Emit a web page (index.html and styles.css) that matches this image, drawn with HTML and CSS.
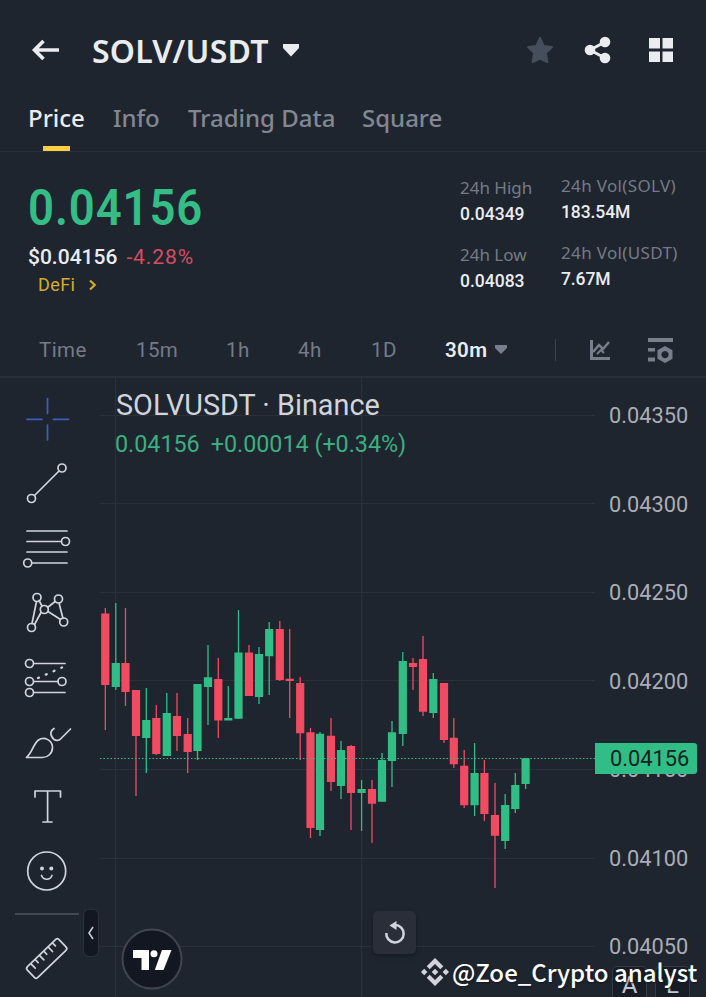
FILE: index.html
```html
<!DOCTYPE html>
<html lang="en">
<head>
<meta charset="utf-8">
<title>SOLV/USDT</title>
<link rel="stylesheet" href="styles.css">
</head>
<body>
<main class="app">
  <header class="topbar">
    <svg class="back" viewBox="0 0 30 24" width="30" height="24"><path d="M28 12H4M12.500 3L3.500 12l9 9" fill="none" stroke="#eaecef" stroke-width="3.600"/></svg>
    <h1 class="pair">SOLV/USDT</h1>
    <svg class="caret" viewBox="0 0 18 13" width="18" height="13"><path d="M1 0h16v4L9 12.500 1 4z" fill="#eaecef"/></svg>
    <svg class="star" viewBox="0 0 28 28" width="28" height="28"><path d="M14 2l3.600 8 8.400 1-6.200 6 1.600 9L14 22.500 6.600 26l1.600-9L2 11l8.400-1z" fill="#444f5b" stroke="#444f5b" stroke-width="2" stroke-linejoin="round"/></svg>
    <svg class="share" viewBox="0 0 28 28" width="28" height="28"><path d="M21 6L6 14l15 8" fill="none" stroke="#eaecef" stroke-width="3"/><g fill="#eaecef"><circle cx="21" cy="6" r="5.300"/><circle cx="6" cy="14" r="5.300"/><circle cx="21" cy="22" r="5.300"/></g></svg>
    <svg class="apps" viewBox="0 0 26 26" width="26" height="26"><path d="M1 1h11v10.500H1zM14.500 1H25v10.500H14.500zM1 14.500h11V25H1zM14.500 14.500H25V25H14.500z" fill="#eaecef"/></svg>
  </header>
  <nav class="tabs">
    <a class="tab active">Price</a><a class="tab info">Info</a><a class="tab trading">Trading Data</a><a class="tab">Square</a>
  </nav>
  <section class="summary">
    <div class="quote">
      <div class="last">0.04156</div>
      <div class="fiat"><span class="usd">$0.04156</span><span class="change">-4.28%</span></div>
      <div class="tag"><span>DeFi</span><svg viewBox="0 0 8 12" width="8" height="12"><path d="M1 1.500L5.700 6 1 10.500" fill="none" stroke="#d6ab2c" stroke-width="2.200"/></svg></div>
    </div>
    <dl class="stats">
      <div class="stat"><dt>24h High</dt><dd>0.04349</dd></div>
      <div class="stat"><dt>24h Low</dt><dd>0.04083</dd></div>
    </dl>
    <dl class="stats volume">
      <div class="stat"><dt>24h Vol(SOLV)</dt><dd>183.54M</dd></div>
      <div class="stat"><dt>24h Vol(USDT)</dt><dd>7.67M</dd></div>
    </dl>
  </section>
  <nav class="intervals">
    <span>Time</span><span>15m</span><span>1h</span><span>4h</span><span>1D</span>
    <span class="selected">30m<svg viewBox="0 0 12 9" width="12" height="9"><path d="M0 0h12v3L6 9 0 3z" fill="#767f8b"/></svg></span>
    <i class="sep"></i>
    <svg class="tool" viewBox="588 335 24 26" width="24" height="26"><g fill="none" stroke="#767f8b"><path d="M591.500 338v18.500H610" stroke-width="3"/><path d="M593 350l6-7 4 4 6-7" stroke-width="2.500"/><path d="M597 352l4-4 3 3" stroke-width="2"/></g></svg>
    <svg class="tool" viewBox="646 334 28 28" width="28" height="28"><g fill="#767f8b"><path d="M648 336h25v4h-25zM648 346h7v3.500h-7zM648 355.500h7v4h-7z"/><path fill-rule="evenodd" d="M665 344l7.500 4.200v8.600L665 361l-7.500-4.200v-8.600zM665 349a3.600 3.600 0 1 0 .01 0z"/></g></svg>
  </nav>
  <section class="chart">
    <aside class="drawing">
      <svg viewBox="15 387 64 64"><path d="M47.500 398.500v15M47.500 425v15M27 419.300h15M53.500 419.300h15" stroke="#3b5fc0"/></svg>
      <svg viewBox="15 451 64 64"><path d="M34.500 495.500L59 471"/><circle cx="62" cy="468" r="4"/><circle cx="31.500" cy="498.500" r="4"/></svg>
      <svg viewBox="15 515 64 64"><path d="M27 531h40M27 541.500h34M27 552h40M32 563h35"/><circle cx="65.500" cy="541.500" r="4"/><circle cx="27.700" cy="563" r="4"/></svg>
      <svg viewBox="15 579 64 64"><path d="M36.500 601.500l-4.500 22M39 600.500l3 5.500M47.500 607.500l7-5.500M59 603l4 15.500M48 611.500l12.500 8M41 612.500l-6.500 12"/><circle cx="37" cy="597.500" r="4"/><circle cx="58.500" cy="599" r="4"/><circle cx="44.300" cy="609.500" r="4"/><circle cx="31.500" cy="627.500" r="4"/><circle cx="63.700" cy="622" r="4"/></svg>
      <svg viewBox="15 643 64 64"><path d="M34 663.500h31M34 681.500h24M34 692.500h31"/><path d="M38 678l24-10.500" stroke-dasharray="1 7.500" stroke-width="2.300"/><circle cx="29.500" cy="663.500" r="4"/><circle cx="29.500" cy="681.500" r="4"/><circle cx="62" cy="681.500" r="4"/><circle cx="29.500" cy="692.500" r="4"/></svg>
      <svg viewBox="15 707 64 64"><path d="M26.500 757.500c6-5 7-14 12-17.500 6-4 14 .5 14 7.500 0 6-5 10-10 10zM54 728.500c-3 2-4 5-2 8.500 2.500 4.500 7 4 9 1.500L70.500 729"/></svg>
      <svg viewBox="15 771 64 64"><path d="M35 797v-6h25.500v6M47.600 791v31M43 822h9"/></svg>
      <svg viewBox="15 835 64 64"><circle cx="46.700" cy="871" r="19"/><path d="M41.500 875.500c2 5 8.500 5 10.500 0"/><g fill="#d1d4dc" stroke="none"><circle cx="42" cy="868.500" r="2"/><circle cx="51.300" cy="868.500" r="2"/></g></svg>
      <hr>
      <svg viewBox="15 927 64 64"><g transform="translate(46.700 958.500) rotate(-44)"><rect x="-22" y="-7.500" width="44" height="15" rx="2.500"/><path d="M-15 -7v6M-9 -7v4M-3 -7v6M3 -7v4M9 -7v6M15 -7v4"/></g></svg>
    </aside>
    <div class="plot">
      <svg class="candles" viewBox="100 376 495 621" width="495" height="621">
        <path class="grid" d="M100 415.500H595M100 503.500H595M100 592.500H595M100 680.500H595M100 769.500H595M100 858.500H595M100 946.500H595M115.500 376V997M361.500 376V997"/>
        <path class="wick down" d="M105.300 608V730M125.500 608V706M136 690V796M156.300 705V755M177 693V751M187.700 718V773M218.300 658V738M249 645V696M279.800 621V681M289.700 629V718M300.200 677V760M310.500 728V838M331 718V791M351 745V830M372 780V843M413 658V690M423 636V716M444 683V743M453.800 718V768M464.200 750V808M484.400 760V821M495 783V888"/>
        <path class="wick up" d="M115.800 603V690M146.300 688V773M166.800 693V756M197.500 684V760M208 645V725M228.300 686V720M238.500 610V719M259 647V704M269.200 622V695M320 732V836M341 741V799M361.600 780V831M382 753V802M392 721V787M402.800 652V746M433.300 673V718M474.600 743V816M505.200 794V849M515.300 773V813M525.600 758V789"/>
        <path class="body down" d="M105.300 613.500V685M125.500 663V692M136 690V736M156.300 718V754M177 716V736M187.700 734V752M218.300 679V720.500M249 652.500V696M279.800 629V680M289.700 678.700V681M300.200 683V733.300M310.500 732.300V828M331 735.700V782M351 746V793M372 789V803.700M413 663V667M423 659V711.700M444 683V740M453.800 737.700V764.300M464.200 765.700V805.300M484.400 773V814M495 815V835.700"/>
        <path class="body up" d="M115.800 663V687M146.300 720V738M166.800 713V756M197.500 684V751M208 677.300V687M228.300 718V720.500M238.500 652.500V718.700M259 654V697M269.200 629V656.300M320 733.700V830M341 750V786M361.600 789V793M382 760V801.700M392 732.300V761M402.800 661V734M433.300 679V713M474.600 773V805.300M505.200 805V841M515.300 785V809M525.600 758.300V784"/>
        <path class="lastline" d="M100 758.500H595"/>
      </svg>
      <div class="legend"><div class="symbol">SOLVUSDT · Binance</div><div class="delta"><span>0.04156</span><span>+0.00014 (+0.34%)</span></div></div>
      <div class="collapse"><svg viewBox="0 0 8 14" width="8" height="14"><path d="M6 1L2 7l4 6" fill="none" stroke="#c8cbd3" stroke-width="1.600"/></svg></div>
      <svg class="tv" viewBox="120 928 64 64" width="64" height="64"><circle cx="152" cy="959" r="29.500" fill="#131722" stroke="#41454f" stroke-width="2"/><g fill="#fff"><path d="M133 950h16v20h-7.500v-12H133z"/><circle cx="154" cy="953.700" r="3.500"/><path d="M162 950h9.500l-8 20h-8.700z"/></g></svg>
      <div class="reset"><svg viewBox="0 0 24 24" width="24" height="24"><path d="M3.300 12a8.700 8.700 0 1 0 8.700-8" fill="none" stroke="#d1d4dc" stroke-width="2.500"/><path d="M6.500 4.500L13.500 0v9z" fill="#d1d4dc"/></svg></div>
    </div>
    <aside class="axis">
      <span>0.04350</span><span>0.04300</span><span>0.04250</span><span>0.04200</span><span>0.04150</span><span>0.04100</span><span>0.04050</span>
      <b class="current">0.04156</b>
      <div class="modes"><i>A</i><i>L</i></div>
    </aside>
  </section>
  <div class="credit">
    <svg viewBox="0 0 28 28" width="28" height="28"><g fill="#d1d4dc"><path d="M14 0l8.300 8.300-3 3L14 6 8.700 11.300l-3-3zM14 28l8.300-8.300-3-3L14 22l-5.300-5.300-3 3zM14 10.700l3.300 3.300-3.300 3.300-3.300-3.300zM3.200 10.800L6.400 14l-3.200 3.200L0 14zM24.800 10.800L28 14l-3.200 3.200-3.200-3.200z"/></g></svg>
    <span>@Zoe_Crypto analyst</span>
  </div>
</main>
</body>
</html>
```
FILE: styles.css
```css
* { box-sizing: border-box; }
body { margin: 0; background: #1f252f; }
.app { position: relative; width: 706px; height: 997px; overflow: hidden; color: #eaecef; font-family: Roboto, "Liberation Sans", sans-serif; background: #1f252f; }
svg { display: block; flex: none; }
.topbar { display: flex; align-items: center; height: 100px; padding-left: 31px; }
.pair { margin: 2px 0 0 31px; width: 179px; font: 600 32px/44px "Noto Sans", sans-serif; letter-spacing: .2px; white-space: nowrap; }
.caret { margin-left: 11px; }
.star { margin-left: 226px; }
.share { margin-left: 30px; }
.apps { margin-left: 36px; }
.tabs { display: grid; grid-template-columns: 85px 75px 174px 1fr; height: 52px; padding-left: 28px; border-bottom: 1px solid #2a313b; font: 500 24px/36px "Noto Sans", sans-serif; color: #818894; white-space: nowrap; }
.tab { display: flex; flex-direction: column; }
.active { width: 57px; color: #eaecef; }
.active::after { content: ""; width: 27px; height: 5px; margin: 10px 0 0 15px; background: #f8cf47; }
.summary { display: flex; height: 170px; }
.quote { width: 460px; padding: 31px 0 0 28px; }
.last { width: 200px; font-size: 50px; line-height: 50px; font-weight: 600; color: #35bd86; letter-spacing: 1px; transform: scaleX(.91); transform-origin: left; }
.fiat { display: flex; gap: 9px; margin-top: 10px; font-size: 21px; line-height: 28px; }
.usd { font-weight: 500; }
.change { color: #d84c60; letter-spacing: .9px; }
.tag { display: flex; align-items: center; gap: 14px; margin-left: 10px; font-size: 18px; line-height: 28px; letter-spacing: .4px; color: #d6ab2c; }
.stats { width: 101px; margin: 0; padding-top: 23px; white-space: nowrap; }
.volume { width: 130px; padding-top: 21px; }
.stat { height: 67px; }
dt { font: 17px/26px "Noto Sans", sans-serif; color: #747b87; }
.volume dt { letter-spacing: .35px; }
dd { margin: 0; font-size: 17.500px; line-height: 26px; font-weight: 500; }
.volume dd { letter-spacing: -.1px; }
.intervals { display: grid; grid-template-columns: 97px 90px 72px 73px 74px 110px 33px 58px 28px; align-items: center; height: 55px; padding-left: 39px; font-size: 20.500px; letter-spacing: .4px; color: #747b87; }
.selected { display: flex; align-items: center; gap: 8px; font-weight: 600; color: #eaecef; }
.sep { width: 1px; height: 22px; background: #3b424d; }
.chart { display: grid; grid-template-columns: 100px 495px 111px; height: 621px; margin-top: -1px; border-top: 2px solid #292e39; }
.drawing { padding: 9px 0 0 15px; }
.drawing svg { width: 64px; height: 64px; fill: none; stroke: #d1d4dc; stroke-width: 1.700; stroke-linecap: round; stroke-linejoin: round; }
.drawing hr { width: 64px; height: 2px; margin: 14px 0 12px; border: 0; background: #434853; }
.plot { position: relative; }
.candles { margin-top: -2px; }
.candles path { fill: none; }
.candles .grid { stroke: #2b303b; stroke-width: 1; }
.wick { stroke-width: 1.300; }
.body { stroke-width: 8.200; }
.down { stroke: #f14b61; }
.up { stroke: #31bd86; }
.lastline { stroke: #40b68b; stroke-width: 1; stroke-dasharray: 1.500 2; }
.legend { position: absolute; top: 8px; left: 16px; white-space: nowrap; }
.symbol { font-size: 28.800px; line-height: 38px; color: #d1d4dc; }
.delta { display: flex; gap: 11px; margin-left: -1px; font-size: 23.300px; line-height: 41px; color: #3cae80; }
.collapse { position: absolute; top: 532px; left: -16px; width: 14px; height: 46px; display: grid; place-items: center; background: #131722; border-radius: 5px; box-shadow: 0 0 0 1px #2b303a; }
.tv { position: absolute; left: 20px; top: 550px; }
.reset { position: absolute; left: 273px; top: 533px; width: 43px; height: 43px; display: grid; place-items: center; border-radius: 5px; background: #2a2e39; box-shadow: 0 2px 5px #151922; }
.axis { position: relative; padding-left: 14px; font-size: 21.800px; color: #a9adb7; }
.axis span { display: block; height: 88.500px; line-height: 76px; }
.current { position: absolute; top: 365px; left: 0; width: 102px; height: 31px; padding-left: 15px; border-radius: 0 3px 3px 0; background: #31bd86; color: #10241f; font-weight: 400; line-height: 32px; }
.modes { position: absolute; top: 588px; left: 17px; display: flex; gap: 8px; }
.modes i { width: 35px; height: 42px; border: 1px solid #363a45; border-radius: 5px; background: #171c27; text-align: center; font: 24px/36px Roboto, sans-serif; color: #c5c8d0; }
.credit { position: absolute; left: 421px; top: 953px; display: flex; align-items: center; gap: 3px; height: 38px; font: 500 24px/38px "Noto Sans CJK SC", sans-serif; color: #fff; white-space: nowrap; text-shadow: 1px 1px 2px #111722; }
```
